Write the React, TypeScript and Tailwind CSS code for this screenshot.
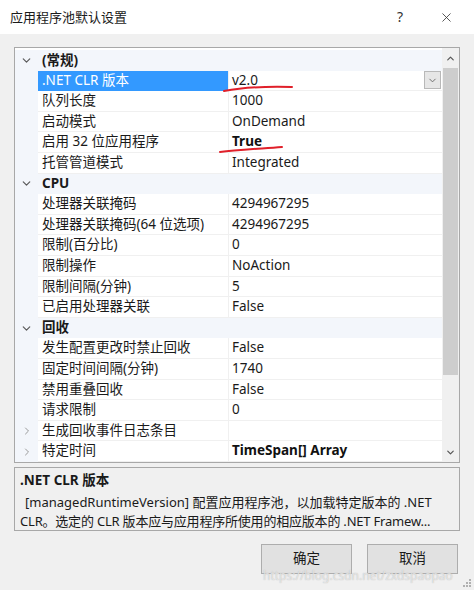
import { ChevronDown, ChevronRight, ChevronUp, X } from 'lucide-react'

type Row =
  | { kind: 'cat'; label: string }
  | { kind: 'prop'; label: string; value?: string; bold?: boolean; selected?: boolean; sub?: boolean }

const rows: Row[] = [
  { kind: 'cat', label: '(常规)' },
  { kind: 'prop', label: '.NET CLR 版本', value: 'v2.0', selected: true },
  { kind: 'prop', label: '队列长度', value: '1000' },
  { kind: 'prop', label: '启动模式', value: 'OnDemand' },
  { kind: 'prop', label: '启用 32 位应用程序', value: 'True', bold: true },
  { kind: 'prop', label: '托管管道模式', value: 'Integrated' },
  { kind: 'cat', label: 'CPU' },
  { kind: 'prop', label: '处理器关联掩码', value: '4294967295' },
  { kind: 'prop', label: '处理器关联掩码(64 位选项)', value: '4294967295' },
  { kind: 'prop', label: '限制(百分比)', value: '0' },
  { kind: 'prop', label: '限制操作', value: 'NoAction' },
  { kind: 'prop', label: '限制间隔(分钟)', value: '5' },
  { kind: 'prop', label: '已启用处理器关联', value: 'False' },
  { kind: 'cat', label: '回收' },
  { kind: 'prop', label: '发生配置更改时禁止回收', value: 'False' },
  { kind: 'prop', label: '固定时间间隔(分钟)', value: '1740' },
  { kind: 'prop', label: '禁用重叠回收', value: 'False' },
  { kind: 'prop', label: '请求限制', value: '0' },
  { kind: 'prop', label: '生成回收事件日志条目', value: '', sub: true },
  { kind: 'prop', label: '特定时间', value: 'TimeSpan[] Array', bold: true, sub: true },
]

function GridRow({ row }: { row: Row }) {
  if (row.kind === 'cat') {
    return (
      <div className="flex h-[20.6px] items-center bg-[#f3f6fb]">
        <div className="flex w-[23px] justify-center">
          <ChevronDown size={13} strokeWidth={2.2} className="text-[#5a5a5a]" />
        </div>
        <span className="pl-[4px] font-bold text-[#1a1a1a]">{row.label}</span>
      </div>
    )
  }
  return (
    <div className="flex h-[20.6px]">
      <div className="flex w-[23px] items-center justify-center bg-[#f3f6fb]">
        {row.sub ? <ChevronRight size={12} strokeWidth={2} className="text-[#9a9a9a]" /> : null}
      </div>
      <div
        className={
          row.selected
            ? 'flex w-[190px] items-center bg-[#3399ff] pl-[4px] text-white'
            : 'flex w-[190px] items-center border-b border-[#f0f0f0] pl-[4px] text-[#1a1a1a]'
        }
      >
        {row.label}
      </div>
      <div className="flex flex-1 items-center justify-between border-b border-l border-[#f0f0f0] pl-[3px] pr-[1px]">
        <span className={row.bold ? 'font-bold text-[#111]' : 'text-[#1a1a1a]'}>{row.value}</span>
        {row.selected ? (
          <span className="flex h-[18px] w-[17px] items-center justify-center border border-[#b8b8b8] bg-[#e6e6e6]">
            <ChevronDown size={11} strokeWidth={2} className="text-[#666]" />
          </span>
        ) : null}
      </div>
    </div>
  )
}

export default function App() {
  return (
    <div
      className="relative h-[590px] w-[474px] overflow-hidden bg-[#f0f0f0] text-[13.5px] leading-none"
      style={{ fontFamily: '"Noto Sans", "Noto Sans CJK SC", sans-serif' }}
    >
      <div className="flex h-[34px] items-center justify-between bg-white pl-[10px] pr-[20px] text-[13px] text-[#1a1a1a]">
        <span>应用程序池默认设置</span>
        <div className="flex items-center gap-[36px] text-[#333]">
          <span className="text-[14px]">?</span>
          <X size={15} strokeWidth={1.3} />
        </div>
      </div>

      <div className="px-[14px] pt-[13px]">
        <div className="flex h-[416px] border border-[#a8a8a8] bg-white">
          <div className="flex flex-1 flex-col pt-[2px]">
            {rows.map((row) => (
              <GridRow key={row.label} row={row} />
            ))}
          </div>
          <div className="flex w-[17px] flex-col items-center bg-[#f0f0f0]">
            <div className="flex h-[20px] items-center justify-center">
              <ChevronUp size={11} strokeWidth={2.6} className="text-[#555]" />
            </div>
            <div className="h-[307px] w-[15px] bg-[#cdcdcd]" />
            <div className="flex-1" />
            <div className="flex h-[20px] items-center justify-center">
              <ChevronDown size={11} strokeWidth={2.6} className="text-[#555]" />
            </div>
          </div>
        </div>

        <div className="mt-[4px] h-[64px] overflow-hidden whitespace-nowrap border border-[#a8a8a8] bg-[#f0f0f0] px-[5px] pt-[6px] text-[13px] text-[#1a1a1a]">
          <div className="text-[13.5px] font-bold">.NET CLR 版本</div>
          <div className="mt-[5px] pl-[5px] leading-[19px]">
            [managedRuntimeVersion] 配置应用程序池，以加载特定版本的 .NET
          </div>
          <div className="leading-[19px] tracking-[-0.2px]">
            CLR。选定的 CLR 版本应与应用程序所使用的相应版本的 .NET Framew...
          </div>
        </div>

        <div className="mt-[13px] flex justify-end gap-[15px] pr-[2px]">
          <button className="h-[30px] w-[91px] border border-[#adadad] bg-[#e1e1e1] text-[#1a1a1a]">确定</button>
          <button className="h-[30px] w-[91px] border border-[#adadad] bg-[#e1e1e1] text-[#1a1a1a]">取消</button>
        </div>
      </div>

      <div className="absolute left-[263px] top-[570px] whitespace-nowrap text-[12px] text-white/60 [text-shadow:0_0_1px_#aaa]">
        https://blog.csdn.net/zxdspaopao
      </div>

      <div className="absolute bottom-[3px] right-[3px] grid grid-cols-3 gap-[1px]">
        <span />
        <span />
        <span className="h-[2px] w-[2px] bg-[#b0b0b0]" />
        <span />
        <span className="h-[2px] w-[2px] bg-[#b0b0b0]" />
        <span className="h-[2px] w-[2px] bg-[#b0b0b0]" />
        <span className="h-[2px] w-[2px] bg-[#b0b0b0]" />
        <span className="h-[2px] w-[2px] bg-[#b0b0b0]" />
        <span className="h-[2px] w-[2px] bg-[#b0b0b0]" />
      </div>

      <svg className="pointer-events-none absolute left-0 top-0" width="474" height="590">
        <path d="M224 91 C240 88 260 86 292 87" stroke="#e0202a" strokeWidth="2" fill="none" strokeLinecap="round" />
        <path d="M220 152 C236 150 255 149 282 147" stroke="#e0202a" strokeWidth="2" fill="none" strokeLinecap="round" />
      </svg>
    </div>
  )
}
